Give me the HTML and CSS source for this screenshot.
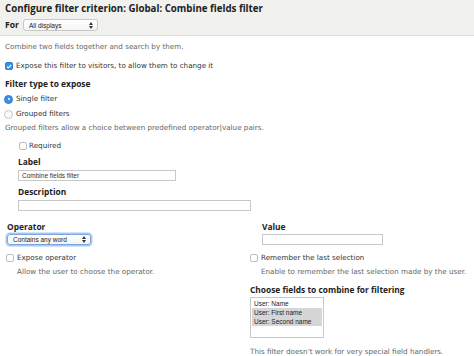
FILE: index.html
```html
<!DOCTYPE html>
<html>
<head>
<meta charset="utf-8">
<link rel="stylesheet" href="styles.css">
</head>
<body>
<div class="header">
  <h1 class="title">Configure filter criterion: Global: Combine fields filter</h1>
  <div class="for-row">
    <span class="for-label">For</span>
    <span class="select select-for"><span class="sel-text">All displays</span><svg class="arrows" width="4" height="7" viewBox="0 0 4 7"><path d="M0 3 L2 0 L4 3 Z M0 4 L2 7 L4 4 Z" fill="#333"/></svg></span>
  </div>
</div>
<div class="content">
  <p class="desc intro">Combine two fields together and search by them.</p>
  <label class="check-row expose"><span class="checkbox checked"><svg width="7" height="7" viewBox="0 0 7 7"><path d="M1.2 3.6 L2.8 5.2 L5.9 1.6" stroke="#fff" stroke-width="1.3" fill="none"/></svg></span>Expose this filter to visitors, to allow them to change it</label>

  <div class="section-title">Filter type to expose</div>
  <label class="radio-row first"><span class="radio on"></span>Single filter</label>
  <label class="radio-row"><span class="radio"></span>Grouped filters</label>
  <p class="desc grouped">Grouped filters allow a choice between predefined operator|value pairs.</p>

  <div class="indent">
    <label class="check-row required"><span class="checkbox"></span>Required</label>
    <div class="field-label">Label</div>
    <div class="text-input w-label">Combine fields filter</div>
    <div class="field-label">Description</div>
    <div class="text-input w-desc"></div>
  </div>

  <div class="columns">
    <div class="col-left">
      <div class="field-label big">Operator</div>
      <span class="select select-op"><span class="sel-text">Contains any word</span><svg class="arrows" width="4" height="7" viewBox="0 0 4 7"><path d="M0 3 L2 0 L4 3 Z M0 4 L2 7 L4 4 Z" fill="#333"/></svg></span>
      <label class="check-row sub"><span class="checkbox"></span>Expose operator</label>
      <p class="desc help">Allow the user to choose the operator.</p>
    </div>
    <div class="col-right">
      <div class="value-block">
        <div class="field-label big">Value</div>
        <div class="text-input w-value"></div>
      </div>
      <label class="check-row sub"><span class="checkbox"></span>Remember the last selection</label>
      <p class="desc help">Enable to remember the last selection made by the user.</p>
      <div class="field-label big choose">Choose fields to combine for filtering</div>
      <div class="multi">
        <div class="opt">User: Name</div>
        <div class="opt sel">User: First name</div>
        <div class="opt sel">User: Second name</div>
      </div>
      <p class="desc note">This filter doesn't work for very special field handlers.</p>
    </div>
  </div>
</div>
</body>
</html>
```

FILE: styles.css
```css
html, body {
  margin: 0;
  padding: 0;
  background: #fff;
}
body {
  font-family: "DejaVu Sans", Verdana, sans-serif;
  font-size: 7.2px;
  color: #333;
  width: 474px;
  height: 356px;
  overflow: hidden;
}
.header {
  background: #f1f1ed;
  border-bottom: 1px solid #dcdcd8;
  height: 36px;
  box-sizing: border-box;
  padding: 2px 5px 0 5px;
}
.title {
  margin: 0;
  font-family: "Open Sans", "DejaVu Sans", sans-serif;
  font-size: 9.7px;
  font-weight: 700;
  color: #222;
  line-height: 13px;
  white-space: nowrap;
}
.for-row {
  display: flex;
  align-items: center;
  gap: 4px;
  margin-top: 4px;
}
.for-label {
  font-family: "Open Sans", "DejaVu Sans", sans-serif;
  font-weight: 700;
  font-size: 8.6px;
  color: #222;
}
.select {
  display: inline-flex;
  align-items: center;
  justify-content: space-between;
  box-sizing: border-box;
  height: 12px;
  border: 1px solid #c8c8c8;
  border-radius: 3px;
  background: linear-gradient(#fff, #f4f4f4);
  padding: 0 4px 0 5px;
  font-family: "Liberation Sans", Arial, sans-serif;
  font-size: 6.5px;
  color: #222;
}
.select-for { width: 75px; }
.select-op {
  width: 84px;
  height: 11px;
  border-color: #7aa7e0;
  box-shadow: 0 0 0 1.5px #a9c8f0;
  margin-top: 2px;
}
.content {
  padding: 0 5px;
}
.desc {
  margin: 0;
  color: #666;
  line-height: 10px;
}
.intro { margin-top: 6px; }
.check-row, .radio-row {
  display: flex;
  align-items: center;
  gap: 3px;
  line-height: 10px;
  color: #333;
}
.check-row.expose { margin-top: 9px; }
.checkbox {
  width: 8px;
  height: 8px;
  box-sizing: border-box;
  border: 1px solid #bdbdbd;
  border-radius: 2px;
  background: #fff;
  display: inline-flex;
  align-items: center;
  justify-content: center;
  flex: none;
}
.checkbox.checked {
  background: #3b8ee8;
  border-color: #2f7cd4;
}
.section-title {
  font-family: "Open Sans", "DejaVu Sans", sans-serif;
  font-weight: 700;
  font-size: 8.4px;
  color: #222;
  margin-top: 8px;
  line-height: 10px;
}
.radio-row { margin-top: 5px; }
.radio {
  width: 9px;
  height: 9px;
  border-radius: 50%;
  box-sizing: border-box;
  border: 1px solid #c4c4c4;
  background: #fafafa;
  flex: none;
  margin-left: -1px;
}
.radio.on {
  background: #3b8ee8;
  border-color: #2f7cd4;
  position: relative;
}
.radio.on::after {
  content: "";
  position: absolute;
  left: 2.5px; top: 2.5px;
  width: 2px; height: 2px;
  border-radius: 50%;
  background: #fff;
}
.grouped { margin-top: 4px; }
.indent { padding-left: 13px; }
.required { margin-top: 8px; gap: 2px; margin-left: 1px; }
.field-label {
  font-family: "Open Sans", "DejaVu Sans", sans-serif;
  font-weight: 700;
  font-size: 8.4px;
  color: #222;
  line-height: 10px;
  margin-top: 6px;
}
.text-input {
  box-sizing: border-box;
  height: 11px;
  border: 1px solid #c8c8c8;
  background: #fff;
  margin-top: 3px;
  font-family: "Liberation Sans", Arial, sans-serif;
  font-size: 6.5px;
  line-height: 9px;
  padding-left: 3px;
  color: #333;
}
.w-label { width: 158px; }
.w-desc { width: 233px; }
.w-value { width: 121px; }
.columns {
  display: grid;
  grid-template-columns: 245px 1fr;
  margin-top: 11px;
}
.col-left { padding-left: 2px; }
.field-label.big { font-size: 8.4px; margin-top: 0; }
.value-block { padding-left: 12px; }
.value-block .text-input { margin-top: 2px; }
.check-row.sub { margin-top: 8px; }
.col-left .check-row.sub { margin-left: -1px; }
.help { margin-top: 4px; }
.col-left .help { padding-left: 10px; }
.col-right .help { padding-left: 11px; }
.field-label.choose { margin-top: 8px; }
.multi {
  width: 74px;
  height: 41px;
  box-sizing: border-box;
  border: 1px solid #c8c8c8;
  margin-top: 2px;
  padding: 1px 1px;
  font-family: "Liberation Sans", Arial, sans-serif;
  font-size: 6.5px;
  color: #222;
}
.opt { line-height: 9px; padding-left: 2px; }
.opt.sel { background: #d6d6d6; }
.note { margin-top: 9px; line-height: 9px; }
.sel-text { white-space: nowrap; }
.arrows { flex: none; }
```
